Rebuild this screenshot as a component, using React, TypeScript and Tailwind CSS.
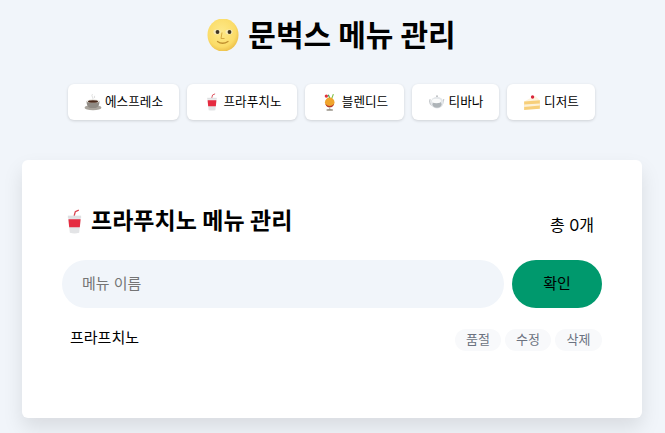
const font = "[font-family:Inter,'Noto_Sans_CJK_KR',sans-serif]";

function Moon({ className }: { className: string }) {
  return (
    <svg viewBox="0 0 32 32" className={className}>
      <defs>
        <radialGradient id="moonFill" cx="45%" cy="40%" r="65%">
          <stop offset="0%" stopColor="#fde98a" />
          <stop offset="70%" stopColor="#fbdc68" />
          <stop offset="100%" stopColor="#e9b942" />
        </radialGradient>
      </defs>
      <ellipse cx="16" cy="16" rx="15.5" ry="16.5" fill="url(#moonFill)" />
      <ellipse cx="10" cy="13" rx="3.6" ry="2.4" fill="#f6eab8" />
      <ellipse cx="22" cy="13" rx="3.6" ry="2.4" fill="#f6eab8" />
      <circle cx="10.5" cy="13" r="1.9" fill="#3f3523" />
      <circle cx="22.5" cy="13" r="1.9" fill="#3f3523" />
      <path d="M15 13.5 14 19.5 17.5 19.5" fill="none" stroke="#d6aa42" strokeWidth="1" />
      <path d="M10.5 22.5Q15.5 26 21 22.5" fill="none" stroke="#c0902f" strokeWidth="1.3" strokeLinecap="round" />
    </svg>
  );
}

function Cup({ className }: { className: string }) {
  return (
    <svg viewBox="0 0 32 32" className={className}>
      <path d="M15.5 9 17 3.5 21.5 1.5" fill="none" stroke="#d9434f" strokeWidth="1.6" />
      <path d="M7.5 8.5h17v3h-17z" fill="#dfe0e2" />
      <path d="M8 11.5h16l-2 19q-6 1.5-12 0z" fill="#e3e4e6" />
      <path d="M8.2 13h15.6l-1 10.5H9.2z" fill="#e52b40" />
    </svg>
  );
}

function Coffee({ className }: { className: string }) {
  return (
    <svg viewBox="0 0 32 32" className={className}>
      <path d="M15 2q-2 3 0 5t0 5M19 5q-1 2 0 4" fill="none" stroke="#d8d8d8" strokeWidth="1.5" />
      <ellipse cx="16" cy="26" rx="15" ry="4.5" fill="#a9a49c" />
      <path d="M4.5 14h23q0 11-7 12.5h-9q-7-1.5-7-12.5z" fill="#8f8a83" />
      <ellipse cx="16" cy="14.5" rx="11.5" ry="3.2" fill="#e9e6e0" />
      <ellipse cx="16" cy="15" rx="9" ry="2.2" fill="#4a2a1a" />
    </svg>
  );
}

function Cocktail({ className }: { className: string }) {
  return (
    <svg viewBox="0 0 32 32" className={className}>
      <circle cx="9.5" cy="5.5" r="3" fill="#e0333c" />
      <path d="M13 3 16 10" stroke="#3b9e4a" strokeWidth="2" />
      <path d="M22 2 19 10" stroke="#7abf45" strokeWidth="2" />
      <ellipse cx="15.5" cy="16.5" rx="8.5" ry="8.5" fill="#f0a52c" />
      <path d="M7.5 19q8 8 16 0-2 6.5-8 6.5t-8-6.5z" fill="#b6382a" />
      <path d="M14.5 25h2v4h-2z" fill="#b9b4a8" />
      <ellipse cx="15.5" cy="30" rx="6" ry="1.6" fill="#9a958a" />
    </svg>
  );
}

function Teapot({ className }: { className: string }) {
  return (
    <svg viewBox="0 0 32 32" className={className}>
      <path d="M4 11q-3 6 3 11M28 11l-2 8" fill="none" stroke="#c6cacd" strokeWidth="2.4" />
      <circle cx="16" cy="6" r="1.8" fill="#b9bdc0" />
      <ellipse cx="16" cy="17" rx="11.5" ry="10.5" fill="#e4e7ea" />
      <ellipse cx="16" cy="20" rx="8" ry="6" fill="#aeb4b8" />
      <ellipse cx="15" cy="14" rx="8" ry="4" fill="#fafbfb" />
    </svg>
  );
}

function Cake({ className }: { className: string }) {
  return (
    <svg viewBox="0 0 32 32" className={className}>
      <path d="M2 15 21 5l9 8v3L2 19z" fill="#fdf4e0" />
      <path d="M2 15 30 13v15L2 30z" fill="#f7cf7a" />
      <path d="M2 20.5 30 18.5v3.5L2 25z" fill="#fdf1d8" />
      <circle cx="17" cy="7" r="3" fill="#d8243a" />
    </svg>
  );
}

const tabs = [
  { Icon: Coffee, label: '에스프레소', width: 'w-[111px]' },
  { Icon: Cup, label: '프라푸치노', width: 'w-[110px]' },
  { Icon: Cocktail, label: '블렌디드', width: 'w-[99px]' },
  { Icon: Teapot, label: '티바나', width: 'w-[87px]' },
  { Icon: Cake, label: '디저트', width: 'w-[88px]' },
];

export default function App() {
  return (
    <div className={`${font} min-h-[433px] bg-[#f1f5fa] text-black overflow-hidden`}>
      <header className="pt-[14px] flex justify-center">
        <h1 className="text-[30px] leading-[42px] font-bold flex items-center gap-[9px] pr-[2px]">
          <Moon className="w-8 h-8" />
          문벅스 메뉴 관리
        </h1>
      </header>
      <nav className="mt-[28px] flex justify-center gap-2 pr-[2px]">
        {tabs.map(({ Icon, label, width }) => (
          <button
            key={label}
            className={`${width} h-9 bg-white rounded-md shadow-[0_1px_3px_rgba(0,0,0,0.15)] text-[12.6px] flex items-center justify-center gap-[3px] whitespace-nowrap`}
          >
            <Icon className="w-[18px] h-[18px]" />
            {label}
          </button>
        ))}
      </nav>
      <main className="mt-10 ml-[22px] w-[620px] h-[258px] bg-white rounded-md shadow-[0_10px_20px_rgba(0,0,0,0.1)] px-10 pt-[45px]">
        <div className="flex justify-between items-end">
          <h3 className="text-[23px] leading-8 font-bold flex items-center gap-[4px] mb-[1px]">
            <Cup className="w-[25px] h-[25px]" />
            프라푸치노 메뉴 관리
          </h3>
          <span className="text-base leading-6 mr-2 mb-[1px]">총 0개</span>
        </div>
        <form className="mt-[22px] flex gap-2">
          <input
            className="flex-1 h-12 rounded-3xl bg-[#f1f5fa] px-5 pb-[2px] text-[15px] outline-none placeholder:text-[#757575]"
            placeholder="메뉴 이름"
          />
          <button type="button" className="w-[90px] h-12 rounded-3xl bg-[#00996d] text-[15px]">확인</button>
        </form>
        <ul className="mt-[21px]">
          <li className="flex justify-between items-center pl-2">
            <span className="text-[15px] leading-6 -mt-[4px]">프라프치노</span>
            <div className="flex gap-1">
              <button className="h-[22px] w-[46px] rounded-full bg-[#f8f9fb] text-[13px] text-[#6b7280]">품절</button>
              <button className="h-[22px] w-[46px] rounded-full bg-[#f8f9fb] text-[13px] text-[#6b7280]">수정</button>
              <button className="h-[22px] w-[47px] rounded-full bg-[#f8f9fb] text-[13px] text-[#6b7280]">삭제</button>
            </div>
          </li>
        </ul>
      </main>
    </div>
  );
}
